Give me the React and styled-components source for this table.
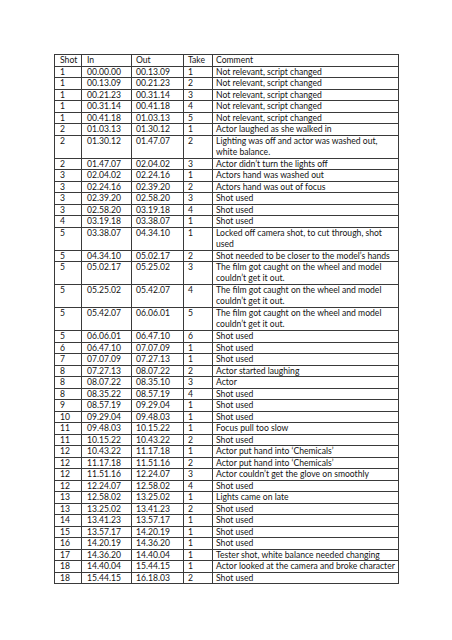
import React from "react";
import styled, { createGlobalStyle } from "styled-components";

const GlobalStyle = createGlobalStyle`
  html, body {
    margin: 0;
    padding: 0;
    background: #ffffff;
  }
  body {
    font-family: "Lato", "Liberation Sans", sans-serif;
    color: #141414;
  }
`

const Page = styled.div`
  width: 452px;
  min-height: 640px;
  padding: 54px 0 0 54px;
  box-sizing: border-box;
`

const Sheet = styled.table`
  border-collapse: collapse;
  table-layout: fixed;
  width: 344px;
  font-size: 8.6px;
`

const Col = styled.col`
  width: ${props => props.$w}px;
`

const Cell = styled.td`
  border: 1px solid #3a3a3a;
  padding: 0 0 0 ${props => props.$pad}px;
  vertical-align: top;
  white-space: nowrap;
  overflow: hidden;
  line-height: ${props => (props.$multi ? "11px" : "10.5px")};
`

const HeadCell = styled.th`
  border: 1px solid #3a3a3a;
  padding: 0 0 0 ${props => props.$pad}px;
  text-align: left;
  font-weight: normal;
  line-height: 10.5px;
  white-space: nowrap;
`

const Line = styled.div`
  white-space: nowrap;
`

const columns = [
    { title: "Shot", w: 27, pad: 5 },
    { title: "In", w: 50, pad: 5 },
    { title: "Out", w: 52, pad: 4 },
    { title: "Take", w: 29, pad: 4 },
    { title: "Comment", w: 186, pad: 3 },
]

const relevant = "Not relevant, script changed"
const used = "Shot used"
const film = ["The film got caught on the wheel and model", "couldn\u2019t get it out."]

const takes = [
    ["1", "00.00.00", "00.13.09", "1", relevant],
    ["1", "00.13.09", "00.21.23", "2", relevant],
    ["1", "00.21.23", "00.31.14", "3", relevant],
    ["1", "00.31.14", "00.41.18", "4", relevant],
    ["1", "00.41.18", "01.03.13", "5", relevant],
    ["2", "01.03.13", "01.30.12", "1", "Actor laughed as she walked in"],
    ["2", "01.30.12", "01.47.07", "2", ["Lighting was off and actor was washed out,", "white balance."]],
    ["2", "01.47.07", "02.04.02", "3", "Actor didn\u2019t turn the lights off"],
    ["3", "02.04.02", "02.24.16", "1", "Actors hand was washed out"],
    ["3", "02.24.16", "02.39.20", "2", "Actors hand was out of focus"],
    ["3", "02.39.20", "02.58.20", "3", used],
    ["3", "02.58.20", "03.19.18", "4", used],
    ["4", "03.19.18", "03.38.07", "1", used],
    ["5", "03.38.07", "04.34.10", "1", ["Locked off camera shot, to cut through, shot", "used"]],
    ["5", "04.34.10", "05.02.17", "2", "Shot needed to be closer to the model\u2019s hands"],
    ["5", "05.02.17", "05.25.02", "3", film],
    ["5", "05.25.02", "05.42.07", "4", film],
    ["5", "05.42.07", "06.06.01", "5", film],
    ["5", "06.06.01", "06.47.10", "6", used],
    ["6", "06.47.10", "07.07.09", "1", used],
    ["7", "07.07.09", "07.27.13", "1", used],
    ["8", "07.27.13", "08.07.22", "2", "Actor started laughing"],
    ["8", "08.07.22", "08.35.10", "3", "Actor"],
    ["8", "08.35.22", "08.57.19", "4", used],
    ["9", "08.57.19", "09.29.04", "1", used],
    ["10", "09.29.04", "09.48.03", "1", used],
    ["11", "09.48.03", "10.15.22", "1", "Focus pull too slow"],
    ["11", "10.15.22", "10.43.22", "2", used],
    ["12", "10.43.22", "11.17.18", "1", "Actor put hand into \u2018Chemicals\u2019"],
    ["12", "11.17.18", "11.51.16", "2", "Actor put hand into \u2018Chemicals\u2019"],
    ["12", "11.51.16", "12.24.07", "3", "Actor couldn\u2019t get the glove on smoothly"],
    ["12", "12.24.07", "12.58.02", "4", used],
    ["13", "12.58.02", "13.25.02", "1", "Lights came on late"],
    ["13", "13.25.02", "13.41.23", "2", used],
    ["14", "13.41.23", "13.57.17", "1", used],
    ["15", "13.57.17", "14.20.19", "1", used],
    ["16", "14.20.19", "14.36.20", "1", used],
    ["17", "14.36.20", "14.40.04", "1", "Tester shot, white balance needed changing"],
    ["18", "14.40.04", "15.44.15", "1", "Actor looked at the camera and broke character"],
    ["18", "15.44.15", "16.18.03", "2", used],
]

function TakeRow({ take }) {
    const comment = take[4]
    const multi = Array.isArray(comment)
    return (
        <tr>
            {take.slice(0, 4).map((value, i) => (
                <Cell key={i} $multi={multi} $pad={columns[i].pad}>{value}</Cell>
            ))}
            <Cell $multi={multi} $pad={columns[4].pad}>
                {multi ? comment.map(line => <Line key={line}>{line}</Line>) : comment}
            </Cell>
        </tr>
    )
}

function App() {
    return (
        <>
            <GlobalStyle />
            <Page>
                <Sheet>
                    <colgroup>
                        {columns.map(c => <Col key={c.title} $w={c.w} />)}
                    </colgroup>
                    <thead>
                        <tr>
                            {columns.map(c => <HeadCell key={c.title} $pad={c.pad}>{c.title}</HeadCell>)}
                        </tr>
                    </thead>
                    <tbody>
                        {takes.map((take, i) => <TakeRow key={i} take={take} />)}
                    </tbody>
                </Sheet>
            </Page>
        </>
    )
}

export default App
